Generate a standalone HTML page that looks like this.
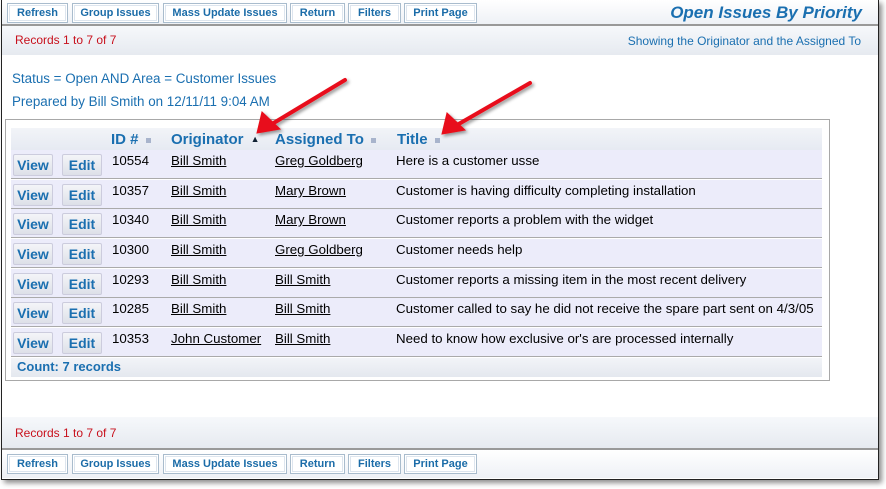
<!DOCTYPE html>
<html><head><style>
*{margin:0;padding:0;box-sizing:border-box}
body{width:886px;height:489px;background:#fff;font-family:"Liberation Sans",Arial,sans-serif;position:relative;overflow:hidden}
.frame{position:absolute;left:1px;top:0;width:878px;height:480px;border:1px solid #222;border-top:none;background:#fff;box-shadow:3px 3px 5px rgba(0,0,0,.45)}
.tb{position:absolute;left:0;height:26px;width:100%;background:linear-gradient(#fff,#eef1f6)}
.btn{position:absolute;top:3px;height:20px;border:1px solid #a9bccd;background:#fff;outline:1px solid #dde5ee;outline-offset:-3px;color:#1b6ca8;font-weight:bold;font-size:11px;text-align:center;line-height:18px}
.band{position:absolute;left:0;width:100%;background:linear-gradient(#f6f8fb,#e6eaf0)}
.red{color:#c8101c;font-size:12px;position:absolute;left:13px}
.blue{color:#1a6fb0;font-size:13.4px;position:absolute;left:10px}
.box{position:absolute;left:5px;top:119px;width:825px;height:262px;border:1px solid #a8a8a8}
.hdr{position:absolute;left:11px;top:128px;width:811px;height:22px;background:linear-gradient(#f2f4f8,#e6eaf2)}
.h{position:absolute;top:131px;color:#1a6fb0;font-weight:bold;font-size:15px}
.sq{display:inline-block;width:5px;height:5px;background:#a8b4cc;margin-left:7px;vertical-align:middle}
.row{position:absolute;left:11px;width:811px;height:29px;background:#ececfa;border-bottom:1px solid #aaa}
.row span{position:absolute;top:3px;font-size:13.3px;color:#000}
.row u{text-decoration:underline}
.vb{position:absolute;top:4px;height:22px;border:1px solid #ccd;border-radius:2px;background:linear-gradient(#f4f5f8,#dde0e8);color:#1a6fb0;font-weight:bold;font-size:14px;text-align:center;line-height:20px}
</style></head><body>
<div class="frame">
 <div class="tb" style="top:0;border-bottom:2px solid #999"></div>
 <div class="band" style="top:26px;height:29px"></div>
 <div class="red" style="top:33px">Records 1 to 7 of 7</div>
 <div style="position:absolute;right:16px;top:3px;color:#1a6fb0;font-weight:bold;font-style:italic;font-size:17px">Open Issues By Priority</div>
 <div style="position:absolute;right:17px;top:34px;color:#1a6fb0;font-size:12px">Showing the Originator and the Assigned To</div>
 <div class="blue" style="top:71px">Status = Open AND Area = Customer Issues</div>
 <div class="blue" style="top:94px">Prepared by Bill Smith on 12/11/11 9:04 AM</div>
 <div class="band" style="top:417px;height:33px;border-bottom:2px solid #999"></div>
 <div class="red" style="top:426px">Records 1 to 7 of 7</div>
 <div class="tb" style="top:450px;height:28px"></div>
</div>
<div class="btn" style="left:7px;width:61px">Refresh</div>
<div class="btn" style="left:72px;width:87px">Group Issues</div>
<div class="btn" style="left:163px;width:124px">Mass Update Issues</div>
<div class="btn" style="left:290px;width:55px">Return</div>
<div class="btn" style="left:348px;width:53px">Filters</div>
<div class="btn" style="left:404px;width:73px">Print Page</div>
<div class="btn" style="left:7px;top:454px;width:61px">Refresh</div>
<div class="btn" style="left:72px;top:454px;width:87px">Group Issues</div>
<div class="btn" style="left:163px;top:454px;width:124px">Mass Update Issues</div>
<div class="btn" style="left:290px;top:454px;width:55px">Return</div>
<div class="btn" style="left:348px;top:454px;width:53px">Filters</div>
<div class="btn" style="left:404px;top:454px;width:73px">Print Page</div>

<div class="box"></div>
<div class="hdr"></div>
<div class="h" style="left:111px">ID #<span class="sq"></span></div>
<div class="h" style="left:171px">Originator <span style="font-size:9px;color:#123;margin-left:3px;vertical-align:2px">▲</span></div>
<div class="h" style="left:275px">Assigned To<span class="sq"></span></div>
<div class="h" style="left:397px">Title<span class="sq"></span></div>

<div class="row" style="top:150px"><div class="vb" style="left:2px;width:40px">View</div><div class="vb" style="left:51px;width:40px">Edit</div><span style="left:101px">10554</span><span style="left:160px"><u>Bill Smith</u></span><span style="left:264px"><u>Greg Goldberg</u></span><span style="left:385px">Here is a customer usse</span></div>
<div class="row" style="top:180px"><div class="vb" style="left:2px;width:40px">View</div><div class="vb" style="left:51px;width:40px">Edit</div><span style="left:101px">10357</span><span style="left:160px"><u>Bill Smith</u></span><span style="left:264px"><u>Mary Brown</u></span><span style="left:385px">Customer is having difficulty completing installation</span></div>
<div class="row" style="top:209px"><div class="vb" style="left:2px;width:40px">View</div><div class="vb" style="left:51px;width:40px">Edit</div><span style="left:101px">10340</span><span style="left:160px"><u>Bill Smith</u></span><span style="left:264px"><u>Mary Brown</u></span><span style="left:385px">Customer reports a problem with the widget</span></div>
<div class="row" style="top:239px"><div class="vb" style="left:2px;width:40px">View</div><div class="vb" style="left:51px;width:40px">Edit</div><span style="left:101px">10300</span><span style="left:160px"><u>Bill Smith</u></span><span style="left:264px"><u>Greg Goldberg</u></span><span style="left:385px">Customer needs help</span></div>
<div class="row" style="top:269px"><div class="vb" style="left:2px;width:40px">View</div><div class="vb" style="left:51px;width:40px">Edit</div><span style="left:101px">10293</span><span style="left:160px"><u>Bill Smith</u></span><span style="left:264px"><u>Bill Smith</u></span><span style="left:385px">Customer reports a missing item in the most recent delivery</span></div>
<div class="row" style="top:298px"><div class="vb" style="left:2px;width:40px">View</div><div class="vb" style="left:51px;width:40px">Edit</div><span style="left:101px">10285</span><span style="left:160px"><u>Bill Smith</u></span><span style="left:264px"><u>Bill Smith</u></span><span style="left:385px">Customer called to say he did not receive the spare part sent on 4/3/05</span></div>
<div class="row" style="top:328px"><div class="vb" style="left:2px;width:40px">View</div><div class="vb" style="left:51px;width:40px">Edit</div><span style="left:101px">10353</span><span style="left:160px"><u>John Customer</u></span><span style="left:264px"><u>Bill Smith</u></span><span style="left:385px">Need to know how exclusive or's are processed internally</span></div>
<div style="position:absolute;left:11px;top:358px;width:811px;height:19px;background:linear-gradient(#f2f4f8,#e4e8ef)"></div>
<div style="position:absolute;left:17px;top:359px;color:#1a6fb0;font-weight:bold;font-size:13px">Count: 7 records</div>

<svg style="position:absolute;left:0;top:0" width="886" height="489">
<defs><filter id="s"><feDropShadow dx="2" dy="2" stdDeviation="1.5" flood-opacity=".4"/></filter></defs>
<g fill="#e8101a" stroke="#e8101a" filter="url(#s)">
<line x1="345" y1="80" x2="272" y2="124" stroke-width="4" stroke-linecap="round"/>
<polygon points="257,133 262,112 280,129"/>
<line x1="530" y1="83" x2="457" y2="125" stroke-width="4" stroke-linecap="round"/>
<polygon points="442,134 447,113 465,130"/>
</g></svg>
</body></html>
